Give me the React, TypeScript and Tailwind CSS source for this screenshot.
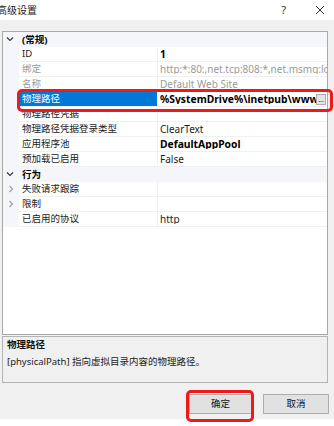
const font = "font-['Noto_Sans','Noto_Sans_CJK_SC',sans-serif]";

type Row =
  | { kind: "cat"; label: string; open: boolean }
  | { kind: "prop"; label: string; value?: string; bold?: boolean; muted?: boolean; selected?: boolean; expandable?: boolean };

const rows: Row[] = [
  { kind: "cat", label: "(常规)", open: true },
  { kind: "prop", label: "ID", value: "1", bold: true },
  { kind: "prop", label: "绑定", value: "http:*:80:,net.tcp:808:*,net.msmq:localhost,msmq.formatname:localhost,net.pipe:*", muted: true },
  { kind: "prop", label: "名称", value: "Default Web Site", muted: true },
  { kind: "prop", label: "物理路径", value: "%SystemDrive%\\inetpub\\wwwroot", bold: true, selected: true },
  { kind: "prop", label: "物理路径凭据", value: "" },
  { kind: "prop", label: "物理路径凭据登录类型", value: "ClearText" },
  { kind: "prop", label: "应用程序池", value: "DefaultAppPool", bold: true },
  { kind: "prop", label: "预加载已启用", value: "False" },
  { kind: "cat", label: "行为", open: true },
  { kind: "prop", label: "失败请求跟踪", value: "", expandable: true },
  { kind: "prop", label: "限制", value: "", expandable: true },
  { kind: "prop", label: "已启用的协议", value: "http" },
];

function Chevron({ open }: { open: boolean }) {
  return open ? (
    <svg width="8" height="6" viewBox="0 0 8 6" className="text-[#333]">
      <path d="M1 1.5 L4 4.5 L7 1.5" fill="none" stroke="currentColor" strokeWidth="1.1" />
    </svg>
  ) : (
    <svg width="6" height="8" viewBox="0 0 6 8" className="text-[#9a9a9a]">
      <path d="M1.5 1 L4.5 4 L1.5 7" fill="none" stroke="currentColor" strokeWidth="1.1" />
    </svg>
  );
}

export default function App() {
  return (
    <div className={`relative w-[334px] h-[426px] overflow-hidden bg-white text-[9.5px] text-black ${font}`}>
      {/* title bar */}
      <div className="h-[20px] bg-white flex items-center">
        <span className="-ml-[3px] text-[10px] text-[#222]">高级设置</span>
        <span className="ml-auto mr-[29px] text-[11px] text-[#333]">?</span>
        <svg width="10" height="10" viewBox="0 0 10 10" className="mr-[9px] text-[#333]">
          <path d="M1 1 L9 9 M9 1 L1 9" stroke="currentColor" strokeWidth="1" />
        </svg>
      </div>

      <div className="bg-[#f0f0f0] h-[399px] pt-[11px] pl-[2px] flex flex-col">
        {/* property grid */}
        <div className="w-[326px] h-[304px] border border-[#a9a9a9] bg-white overflow-hidden">
          <div className="flex">
            <div className="w-[16px] bg-[#f4f6f9] shrink-0" />
            <div className="flex-1 min-w-0">
              {rows.map((r, i) =>
                r.kind === "cat" ? (
                  <div key={i} className="h-[15px] bg-[#f4f6f9] flex items-center pl-[3px] font-bold leading-none relative">
                    <span className="absolute -left-[13px] top-[4px]"><Chevron open={r.open} /></span>
                    {r.label}
                  </div>
                ) : (
                  <div key={i} className="h-[15px] flex border-b border-[#f0f0f0] leading-none relative">
                    {r.expandable && (
                      <span className="absolute -left-[11px] top-[3px]"><Chevron open={false} /></span>
                    )}
                    <div
                      className={`w-[139px] shrink-0 flex items-center pl-[3px] border-r border-[#f0f0f0] ${
                        r.selected ? "bg-[#0078d7] text-white" : r.muted ? "text-[#9a9a9a]" : "text-[#222]"
                      }`}
                    >
                      {r.label}
                    </div>
                    <div
                      className={`flex-1 min-w-0 flex items-center pl-[2px] overflow-hidden whitespace-nowrap ${
                        r.bold ? "font-bold text-black text-[10.3px]" : r.muted ? "text-[#9a9a9a] text-[10px]" : "text-[#222] text-[10px]"
                      }`}
                    >
                      <span className="overflow-hidden flex-1">{r.value}</span>
                      {r.selected && (
                        <span className="shrink-0 mr-[1px] w-[10px] h-[11px] bg-[#e5e5e5] border border-[#adadad] text-[7px] font-normal flex items-end justify-center pb-[1px] text-[#333]">
                          ...
                        </span>
                      )}
                    </div>
                  </div>
                )
              )}
            </div>
          </div>
        </div>

        {/* description */}
        <div className="mt-[1px] w-[326px] h-[47px] border border-[#b4b4b4] bg-[#f0f0f0] px-[4px] leading-[16px]">
          <div className="font-bold text-[#111]">物理路径</div>
          <div className="text-[#222] mt-[1px]">[physicalPath] 指向虚拟目录内容的物理路径。</div>
        </div>

        {/* buttons */}
        <div className="flex justify-end gap-[11px] pr-[5px] mt-[11px]">
          <button className="w-[63px] h-[20px] bg-[#e1e1e1] border border-[#adadad] text-[#111] leading-none">确定</button>
          <button className="w-[66px] h-[20px] bg-[#e1e1e1] border border-[#adadad] text-[#111] leading-none">取消</button>
        </div>
      </div>

      {/* red highlights */}
      <div className="absolute left-[17px] top-[89px] w-[316px] h-[23px] border-[3px] border-[#f01818] rounded-[5px]" />
      <div className="absolute left-[186px] top-[390px] w-[68px] h-[32px] border-[3px] border-[#f01818] rounded-[5px]" />
    </div>
  );
}
